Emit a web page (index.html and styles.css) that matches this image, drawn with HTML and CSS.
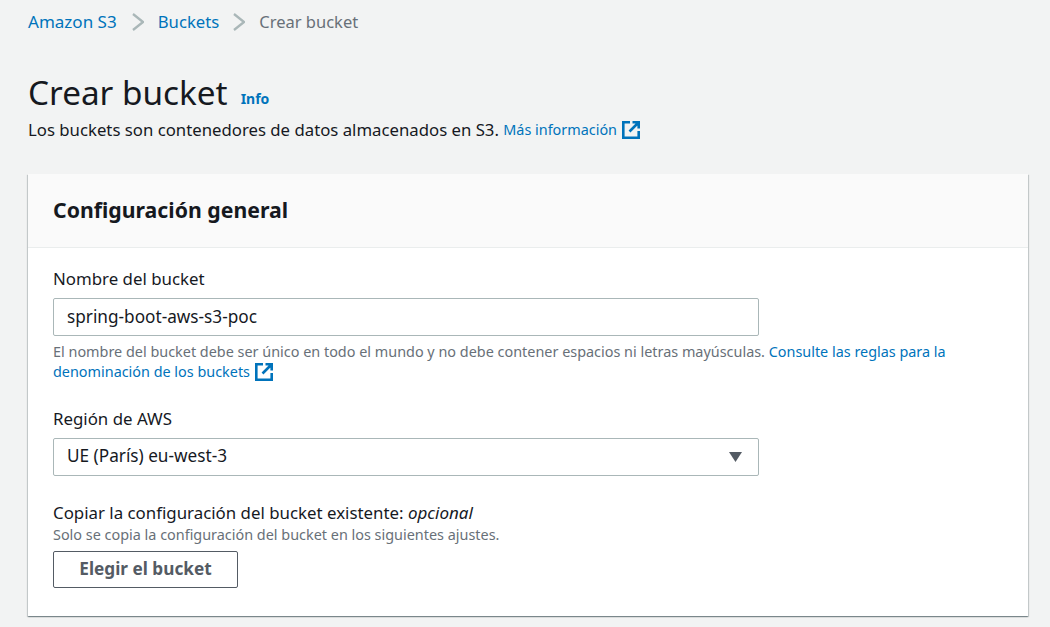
FILE: index.html
```html
<!DOCTYPE html>
<html lang="es">
<head>
<meta charset="utf-8">
<title>Crear bucket</title>
<link rel="stylesheet" href="styles.css">
</head>
<body>
<nav class="crumbs">
  <a class="crumb-root" href="#">Amazon S3</a>
  <svg class="chev" viewBox="0 0 12 18"><path d="M1 1l10 8-10 8"/></svg>
  <a class="crumb-mid" href="#">Buckets</a>
  <svg class="chev" viewBox="0 0 12 18"><path d="M1 1l10 8-10 8"/></svg>
  <span class="crumb-end">Crear bucket</span>
</nav>
<header class="head">
  <div class="title-row"><h1>Crear bucket</h1><a class="info" href="#">Info</a></div>
  <p class="lead">Los buckets son contenedores de datos almacenados en S3. <a class="small-link" href="#">Más información</a><svg class="ext ext-lg" viewBox="0 0 18 18"><path d="M8 1.300H1.300v15.400h15.400V10M10.500 1.300h6.200v6.200M16 2L7.500 10.500"/></svg></p>
</header>
<section class="card">
  <div class="card-head"><h2>Configuración general</h2></div>
  <div class="card-body">
    <label class="label">Nombre del bucket</label>
    <div class="field"><span class="value">spring-boot-aws-s3-poc</span></div>
    <p class="hint hint-a">El nombre del bucket debe ser único en todo el mundo y no debe contener espacios ni letras mayúsculas. <a href="#">Consulte las reglas para la denominación de los buckets</a><svg class="ext" viewBox="0 0 18 18"><path d="M8 1.300H1.300v15.400h15.400V10M10.500 1.300h6.200v6.200M16 2L7.500 10.500"/></svg></p>
    <label class="label label-region">Región de AWS</label>
    <div class="field select"><span class="value value-select">UE (París) eu-west-3</span><svg class="caret" viewBox="0 0 13 10"><path d="M0 0h13L6.500 10z"/></svg></div>
    <label class="label label-copy">Copiar la configuración del bucket existente: <em>opcional</em></label>
    <p class="hint hint-b">Solo se copia la configuración del bucket en los siguientes ajustes.</p>
    <button class="btn" type="button">Elegir el bucket</button>
  </div>
</section>
</body>
</html>
```
FILE: styles.css
```css
* { box-sizing: border-box; }
html, body { height: 100%; }
body {
  margin: 0;
  padding: 0 22px 0 28px;
  overflow: hidden;
  background: #f2f3f3;
  color: #16191f;
  font-family: "Noto Sans", "Open Sans", sans-serif;
  font-size: 16.750px;
}
a { color: #0073bb; text-decoration: none; }
.crumbs {
  display: flex;
  align-items: center;
  height: 44px;
  padding-bottom: 2px;
  font-size: 17.050px;
  color: #687078;
}
.crumb-root { margin-right: 1px; }
.crumb-mid { font-size: 16.700px; }
.crumb-end { font-size: 16.500px; }
.chev { width: 12px; height: 18px; margin: 2px 14px 0; fill: none; stroke: #aab7b8; stroke-width: 2.300; }
.head { margin-top: 26px; }
.title-row { display: flex; align-items: center; height: 44px; }
h1 { margin: 0; font-size: 33.300px; line-height: 44px; font-weight: 400; }
.info { margin: 12px 0 0 13px; font-size: 14px; font-weight: 700; }
.lead { margin: 4px 0 0; display: flex; align-items: center; height: 24px; white-space: pre; line-height: 24px; }
.small-link { font-size: 14.400px; }
.ext { display: inline-block; width: 18px; height: 18px; margin-left: 5px; vertical-align: -4px; fill: none; stroke: #0073bb; stroke-width: 2.600; }
.ext-lg { margin-left: 5px; }
.card {
  margin-top: 32px;
  background: #fff;
  box-shadow: 0 1px 1px 0 rgba(0, 28, 36, .3), 1px 1px 1px 0 rgba(0, 28, 36, .15), -1px 1px 1px 0 rgba(0, 28, 36, .15);
}
.card-head {
  height: 74px;
  padding: 0 25px 2px;
  display: flex;
  align-items: center;
  background: #fafafa;
  border-bottom: 1px solid #eaeded;
}
h2 { margin: 0; font-size: 21.250px; font-weight: 700; }
.card-body { padding: 19px 25px 28px; }
.label { display: block; font-size: 16.850px; line-height: 24px; }
.label em { font-size: 17px; }
.field {
  width: 706px;
  height: 38px;
  margin-top: 7px;
  padding: 0 13px;
  display: flex;
  align-items: center;
  justify-content: space-between;
  background: #fff;
  border: 1px solid #aab7b8;
  border-radius: 2px;
  font-size: 17.200px;
}
.value { margin-bottom: 2px; }
.value-select { margin-bottom: 4px; }
.hint { margin: 0; color: #687078; font-size: 14.420px; line-height: 20px; }
.hint-a { margin-top: 6px; width: 900px; }
.hint-a a { font-size: 14.400px; }
.label-region { margin-top: 25px; }
.caret { width: 13px; height: 10px; margin-right: 3px; fill: #545b64; }
.label-copy { margin-top: 25px; }
.hint-b { line-height: 20px; }
.btn {
  display: block;
  width: 185px;
  height: 37px;
  margin-top: 6px;
  padding: 0 0 2px;
  background: #fff;
  border: 1px solid #545b64;
  border-radius: 2px;
  color: #545b64;
  font: 700 17.200px "Noto Sans", sans-serif;
}
```
